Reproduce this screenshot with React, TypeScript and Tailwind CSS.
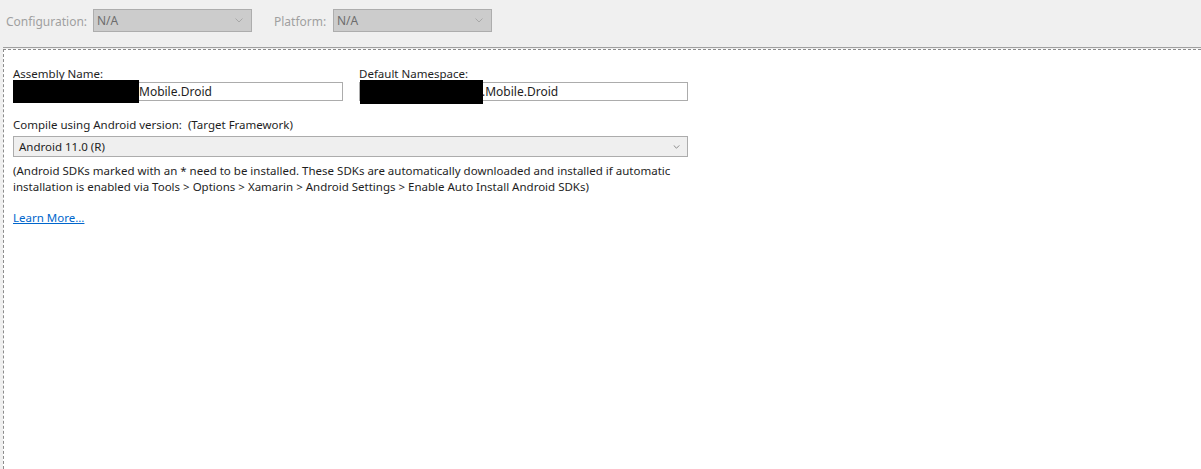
import React from 'react';

const font = { fontFamily: '"Noto Sans", "Open Sans", sans-serif' };

const Chevron: React.FC<{ className?: string }> = ({ className }) => (
    <svg viewBox="0 0 8 5" className={className} fill="none" stroke="currentColor" strokeWidth="1">
        <path d="M0.5 0.5 L4 4 L7.5 0.5" />
    </svg>
);

const DisabledSelect: React.FC<{ value: string }> = ({ value }) => (
    <div className="flex h-[23px] w-[159px] items-center justify-between border border-[#adadad] bg-[#cccccc] pl-[3px] pr-[8px] text-[#6d6d6d]">
        <span className="text-[12px] leading-none">{value}</span>
        <Chevron className="h-[5px] w-[8px] text-[#a8a8a8]" />
    </div>
);

export default function App() {
    return (
        <div className="flex h-[469px] w-[1201px] flex-col bg-[#f0f0f0] text-[11.5px]" style={font}>
            <div className="flex h-[47px] items-start pt-[9px]">
                <span className="ml-[6px] mt-[4px] w-[87px] text-[12px] text-[#a0a0a0]">Configuration:</span>
                <DisabledSelect value="N/A" />
                <span className="ml-[22px] mt-[4px] w-[59px] text-[12px] text-[#a0a0a0]">Platform:</span>
                <DisabledSelect value="N/A" />
            </div>
            <div className="ml-[3px] h-px bg-[#a0a0a0]" />
            <div className="ml-[3px] mt-px flex-1 border-l border-t border-dashed border-[#8c8c8c] bg-white pl-[9px] pt-[15px] text-[#1e1e1e]">
                <div className="flex gap-[16px]">
                    <div className="flex flex-col">
                        <span className="h-[17px] leading-[17px]">Assembly Name:</span>
                        <div className="relative flex h-[19px] w-[330px] items-center border border-[#acacac] bg-white">
                            <div className="absolute -left-px top-[-3px] h-[23px] w-[126px] bg-black" />
                            <span className="absolute left-[125px] text-[12px] leading-none">Mobile.Droid</span>
                        </div>
                    </div>
                    <div className="flex flex-col">
                        <span className="h-[17px] leading-[17px]">Default Namespace:</span>
                        <div className="relative flex h-[19px] w-[329px] items-center border border-[#acacac] bg-white">
                            <div className="absolute left-0 top-[-3px] h-[24px] w-[123px] bg-black" />
                            <span className="absolute left-[122px] text-[12px] leading-none">.Mobile.Droid</span>
                        </div>
                    </div>
                </div>
                <div className="mt-[15px] h-[17px] leading-[17px]">Compile using Android version:&nbsp; (Target Framework)</div>
                <div className="mt-[3px] flex h-[21px] w-[675px] items-center justify-between border border-[#acacac] bg-[#efefef] pl-[5px] pr-[7px]">
                    <span className="leading-none">Android 11.0 (R)</span>
                    <Chevron className="h-[4px] w-[7px] text-[#707070]" />
                </div>
                <p className="mt-[6px] w-[675px] leading-[16px]">
                    (Android SDKs marked with an * need to be installed. These SDKs are automatically downloaded and installed if automatic installation is enabled via Tools &gt; Options &gt; Xamarin &gt; Android Settings &gt; Enable Auto Install Android SDKs)
                </p>
                <a href="#" className="mt-[15px] inline-block leading-[16px] text-[#0066cc] underline">Learn More...</a>
            </div>
        </div>
    );
}
